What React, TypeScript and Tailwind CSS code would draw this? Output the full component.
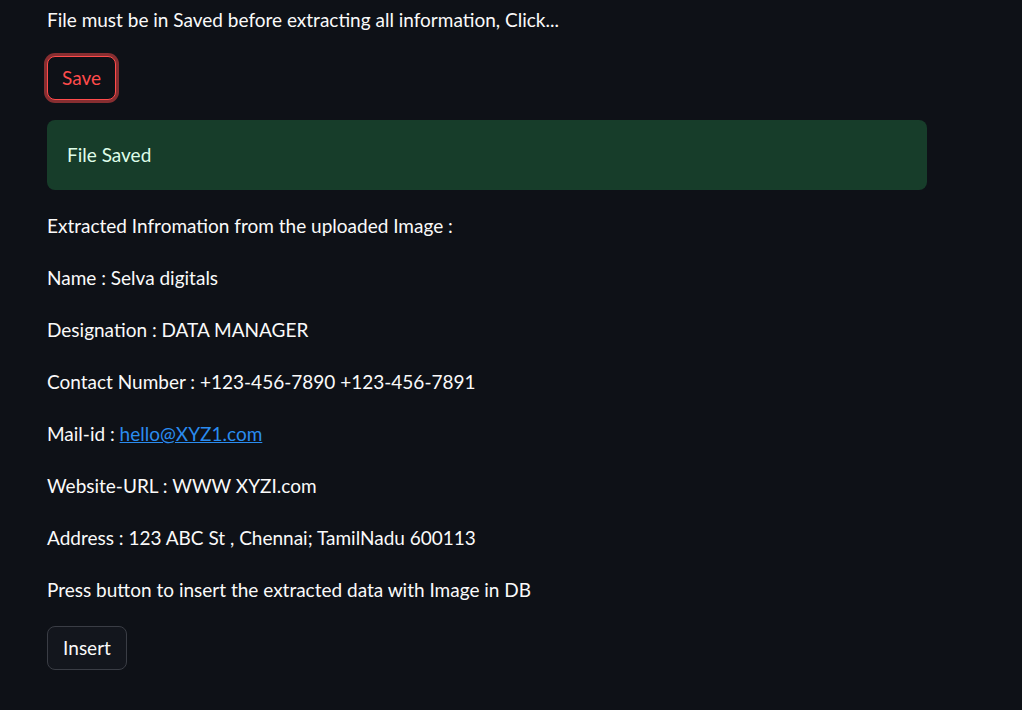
import React from 'react';

const rows = [
  { label: 'Name', value: 'Selva digitals' },
  { label: 'Designation', value: 'DATA MANAGER' },
  { label: 'Contact Number', value: '+123-456-7890 +123-456-7891' },
];

export default function App() {
  return (
    <div className="min-h-[710px] w-full bg-[#0e1117] text-[#fafafa] text-[19px]" style={{ fontFamily: 'Lato, "Open Sans", sans-serif' }}>
      <div className="w-[880px] ml-[47px] pt-[7px] flex flex-col">
        <div className="h-[26px] leading-[26px]">File must be in Saved before extracting all information, Click...</div>

        <div className="mt-[23px]">
          <button className="h-[44px] w-[69px] rounded-[8px] border border-[#ff4b4b] text-[#ff4b4b] bg-[#0e1117] shadow-[0_0_0_3px_rgba(255,75,75,0.5)]">
            Save
          </button>
        </div>

        <div className="mt-[20px] h-[70px] rounded-[8px] bg-[#173d2a] text-[#dffde9] flex items-center px-[20px]">
          File Saved
        </div>

        <div className="mt-[23px] h-[26px] leading-[26px]">Extracted Infromation from the uploaded Image :</div>

        {rows.map((r) => (
          <div key={r.label} className="mt-[26px] h-[26px] leading-[26px]">
            {r.label} : {r.value}
          </div>
        ))}

        <div className="mt-[26px] h-[26px] leading-[26px]">
          Mail-id : <a href="#" className="text-[#2a8cf0] underline">hello@XYZ1.com</a>
        </div>
        <div className="mt-[26px] h-[26px] leading-[26px]">Website-URL : WWW XYZI.com</div>
        <div className="mt-[26px] h-[26px] leading-[26px]">Address : 123 ABC St , Chennai; TamilNadu 600113</div>
        <div className="mt-[26px] h-[26px] leading-[26px]">Press button to insert the extracted data with Image in DB</div>

        <div className="mt-[23px]">
          <button className="h-[44px] w-[80px] rounded-[8px] border border-[#3a3d45] bg-[#13161d] text-[#fafafa]">
            Insert
          </button>
        </div>
      </div>
    </div>
  );
}
